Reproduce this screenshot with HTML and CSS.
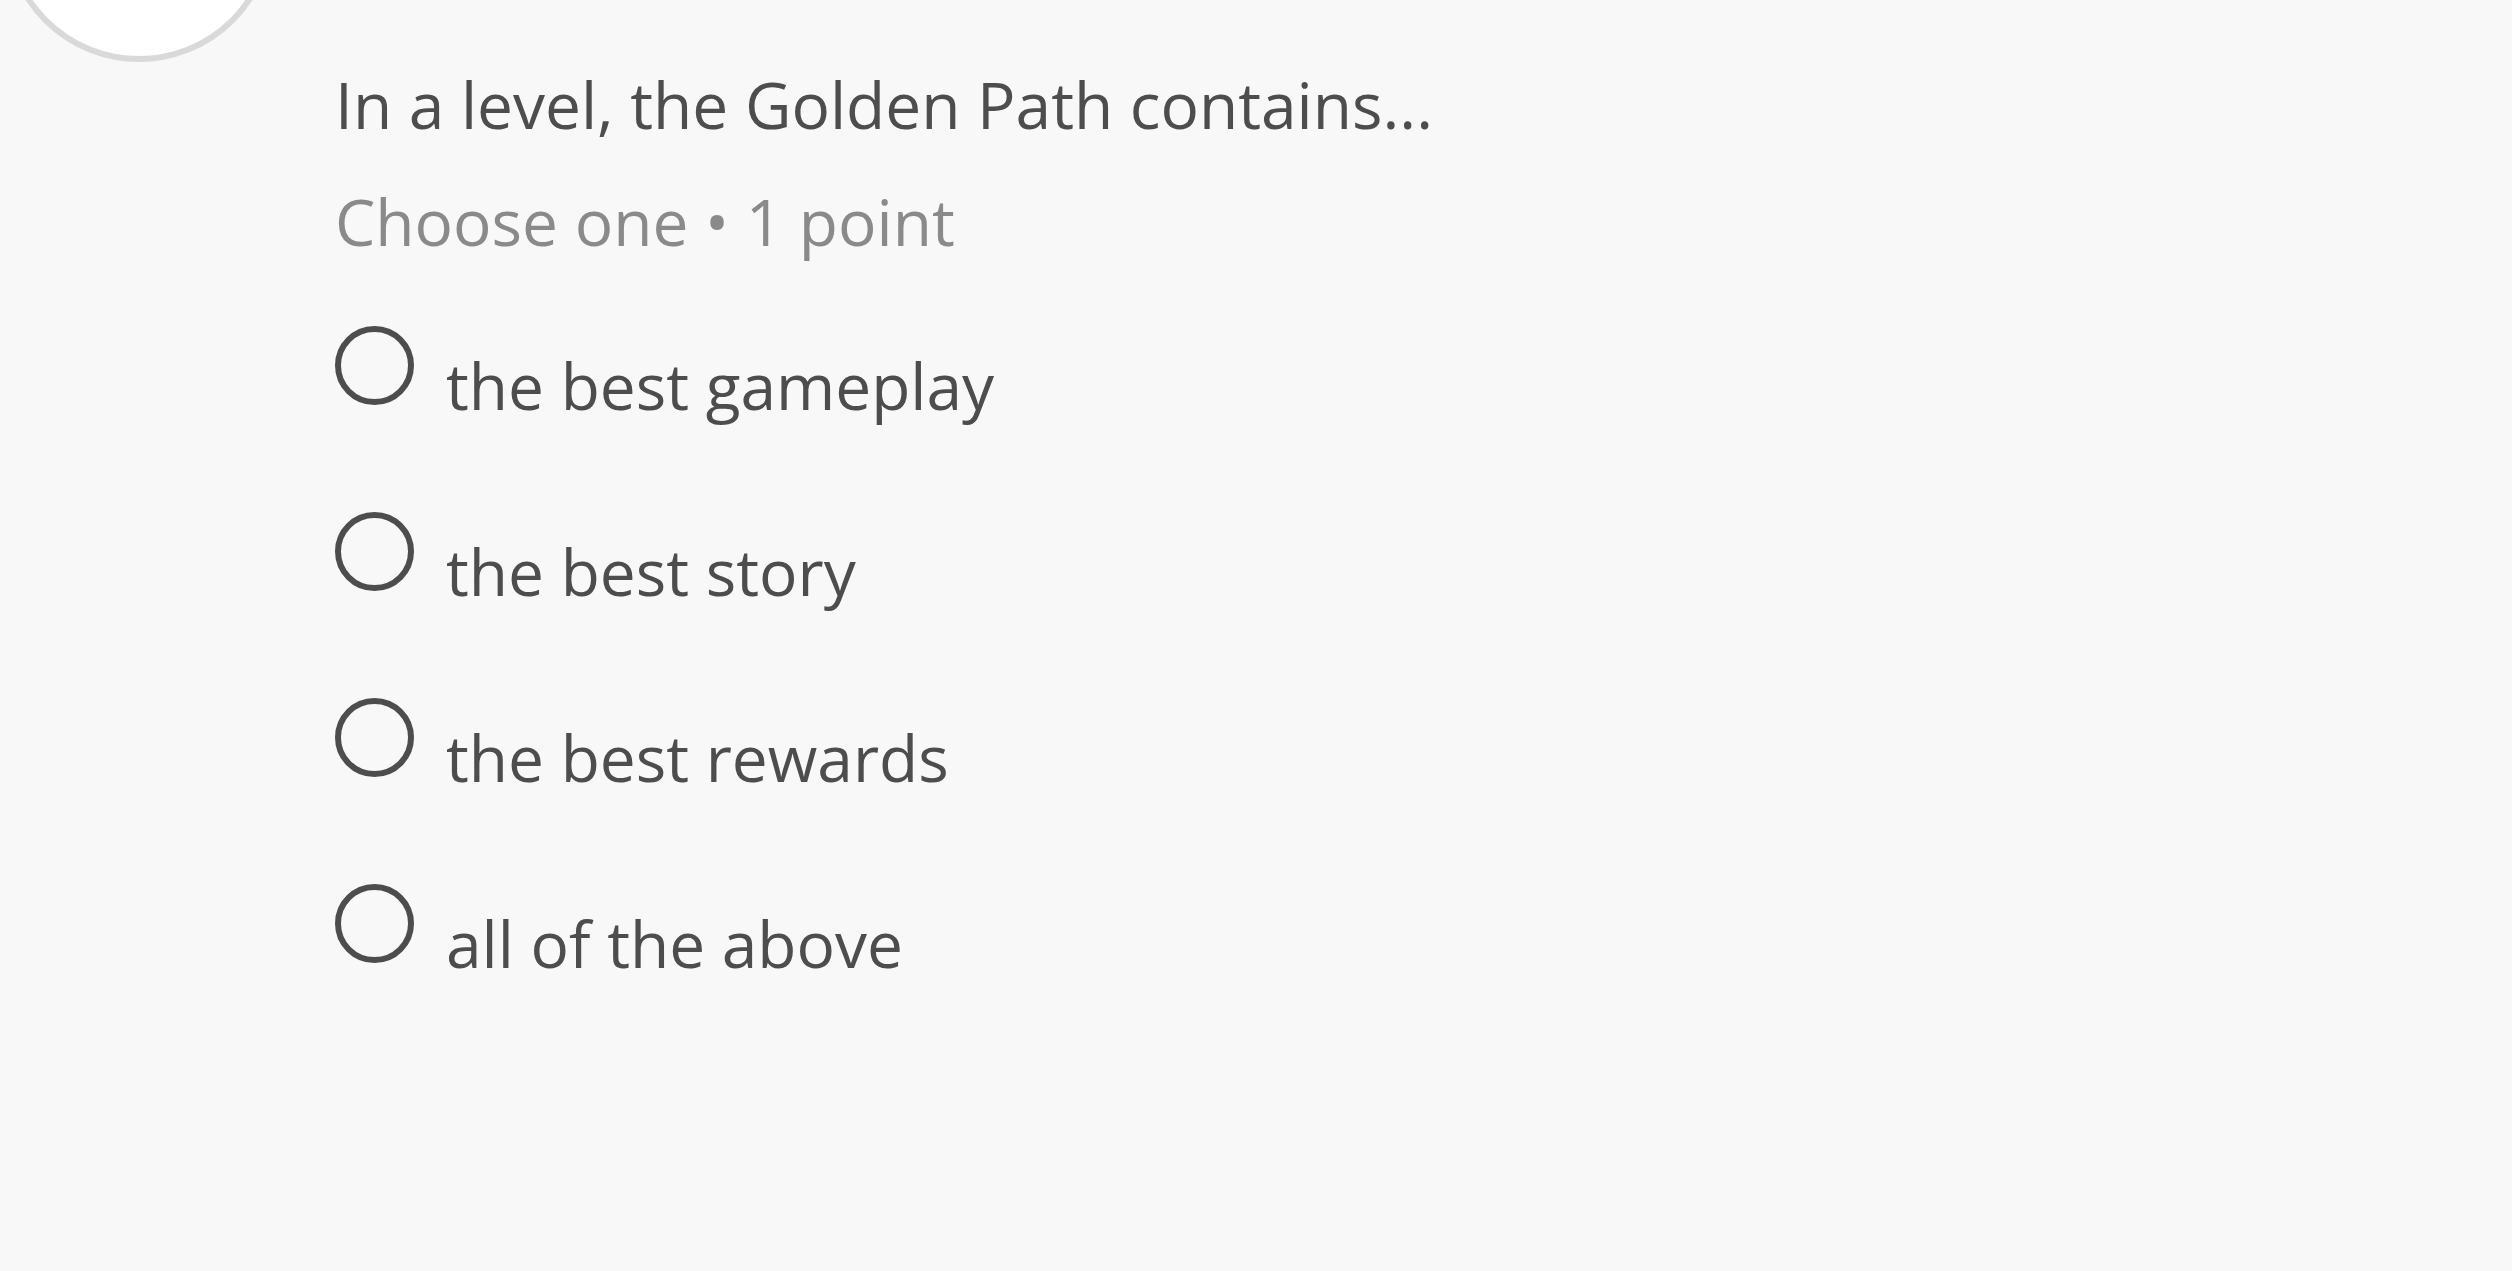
FILE: index.html
```html
<!DOCTYPE html>
<html>
<head>
<meta charset="utf-8">
<link rel="stylesheet" href="styles.css">
</head>
<body>
<div class="page">
  <div class="avatar"></div>
  <div class="question">
    <div class="prompt">In a level, the Golden Path contains...</div>
    <div class="meta">Choose one • 1 point</div>
    <div class="options">
      <div class="option"><span class="radio"></span><span class="label">the best gameplay</span></div>
      <div class="option"><span class="radio"></span><span class="label">the best story</span></div>
      <div class="option"><span class="radio"></span><span class="label">the best rewards</span></div>
      <div class="option"><span class="radio"></span><span class="label">all of the above</span></div>
    </div>
  </div>
</div>
</body>
</html>
```

FILE: styles.css
```css
html, body {
  margin: 0;
  padding: 0;
  background: #f8f8f8;
}
body {
  font-family: "Open Sans", "Liberation Sans", sans-serif;
  color: #4d4d4d;
  overflow: hidden;
  height: 1271px;
}
.page {
  display: flex;
  flex-direction: column;
}
.avatar {
  width: 258px;
  height: 258px;
  border: 6px solid #d9d9d9;
  border-radius: 50%;
  background: #ffffff;
  margin-top: -208px;
  margin-left: 4px;
  flex: none;
}
.question {
  margin-left: 335px;
  display: flex;
  flex-direction: column;
}
.prompt {
  font-size: 64px;
  line-height: 87px;
  margin-top: -1px;
}
.meta {
  font-size: 64px;
  line-height: 87px;
  color: #8a8a8a;
  margin-top: 30px;
}
.options {
  display: flex;
  flex-direction: column;
  gap: 83px;
  margin-top: 61px;
}
.option {
  display: flex;
  align-items: flex-start;
  gap: 32px;
}
.radio {
  width: 67px;
  height: 67px;
  border: 6.5px solid #4d4d4d;
  border-radius: 50%;
  flex: none;
  box-sizing: content-box;
}
.label {
  font-size: 64px;
  line-height: 87px;
  margin-top: 16px;
}
```
